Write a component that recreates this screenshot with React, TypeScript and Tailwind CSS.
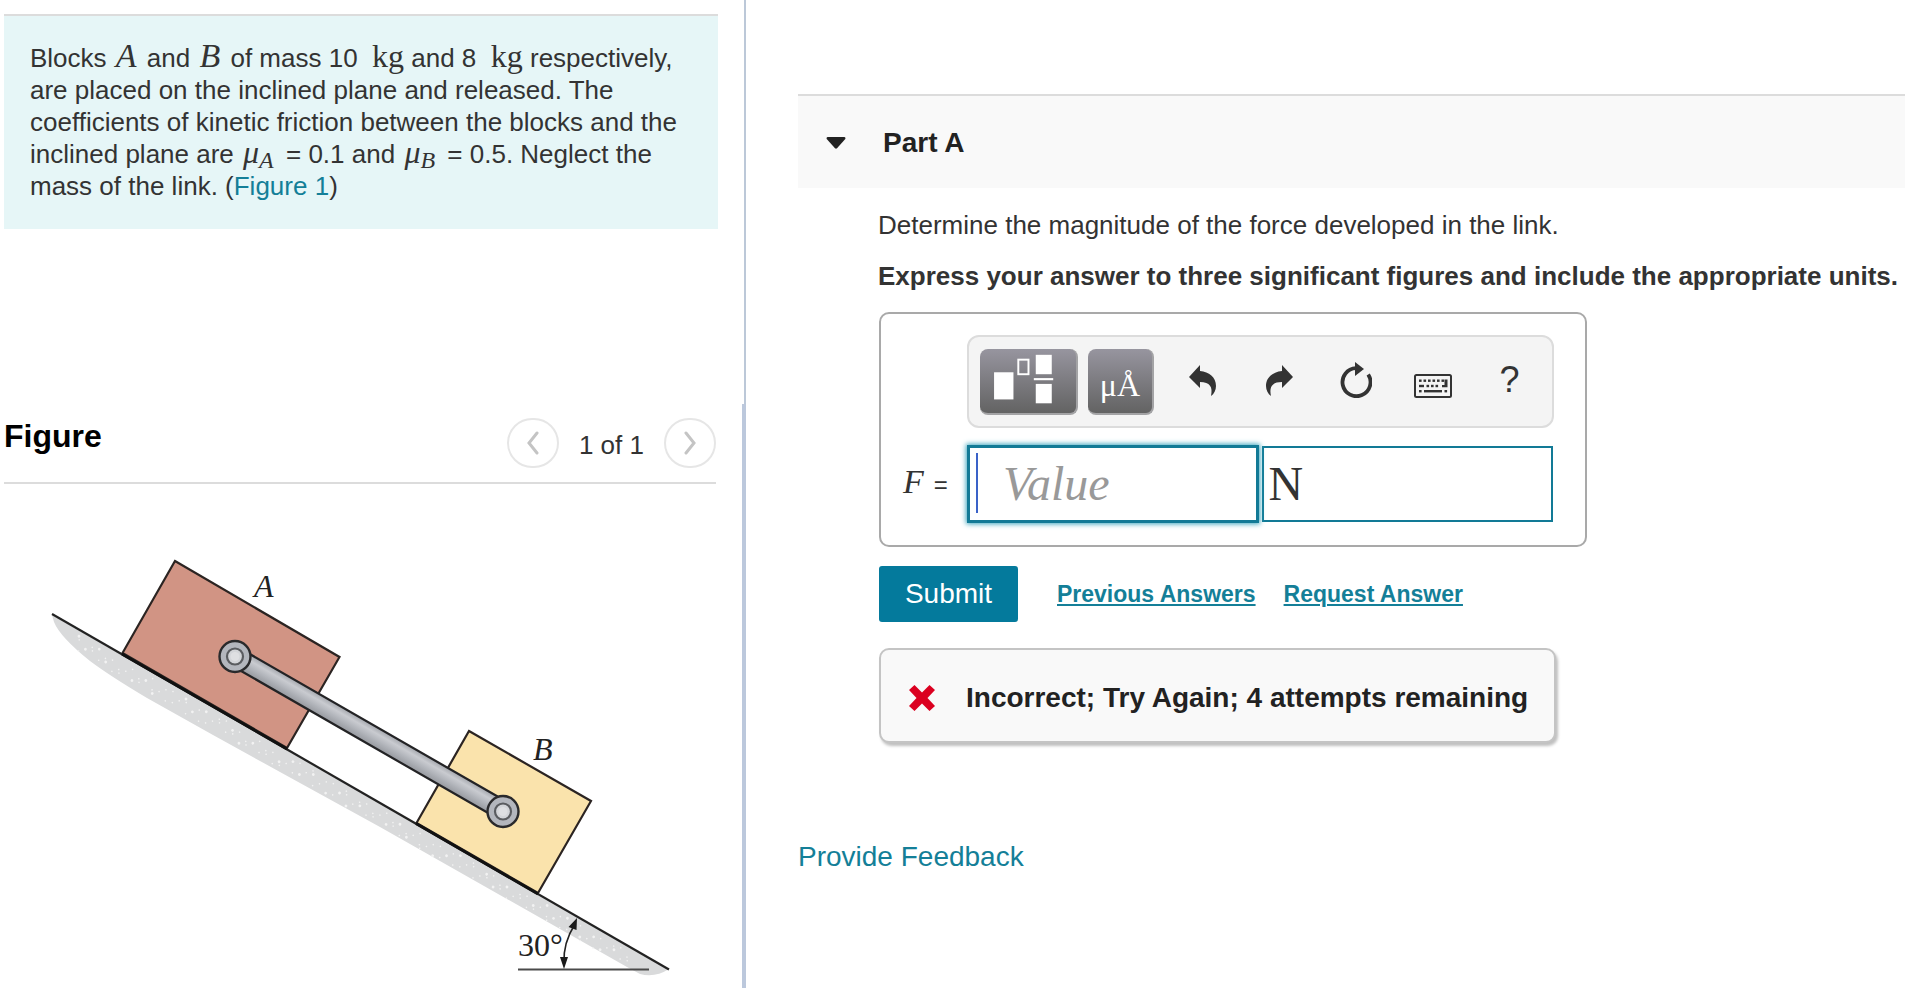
import { useState } from 'react'

interface AnswerLinkProps {
  href: string
  children: string
}

// Where the light specks sit along the ground strip: distance from the top of
// the slope and depth below the surface.
const SPECKS = Array.from({ length: 150 }, (_, i) => ({
  along: 34 + ((i * 73) % 640),
  depth: 5 + ((i * 37) % 15),
  r: i % 4 === 0 ? 1.4 : 0.8,
}))

function MathVar({ children }: { children: string }) {
  return (
    <i className="pr-[3px] pl-[2px] font-['Liberation_Serif',serif] text-[34px] leading-0">
      {children}
    </i>
  )
}

function Unit({ children }: { children: string }) {
  return (
    <span className="font-['Liberation_Serif',serif] text-[32px] leading-0">
      {children}
    </span>
  )
}

function Mu({ sub }: { sub: string }) {
  return (
    <i className="pr-[5px] pl-[2px] font-['Liberation_Serif',serif] text-[32px] leading-0">
      μ<sub className="bottom-[-5px] text-2xl leading-0">{sub}</sub>
    </i>
  )
}

function AnswerLink({ href, children }: AnswerLinkProps) {
  return (
    <a
      href={href}
      className="text-[23px] font-bold text-[#147f98] underline decoration-2 underline-offset-2"
    >
      {children}
    </a>
  )
}

function Chevron({ d }: { d: string }) {
  return (
    <svg viewBox="0 0 16 24" className="h-6 w-4" fill="none" stroke="#c4c4c4" strokeWidth="3">
      <path d={d} strokeLinecap="round" />
    </svg>
  )
}

function TemplatesIcon() {
  return (
    <svg viewBox="0 0 98 66" className="h-full w-full" fill="#fff">
      <rect x="14" y="24" width="20" height="28" />
      <rect x="39" y="11" width="10.5" height="15" fill="none" stroke="#fff" strokeWidth="2" />
      <rect x="57" y="6" width="16.5" height="20" />
      <rect x="55" y="30" width="20" height="2.2" />
      <rect x="57" y="36" width="16.5" height="20" />
    </svg>
  )
}

function UndoIcon({ className = '' }: { className?: string }) {
  return (
    <svg viewBox="0 0 27 31" className={`h-[31px] w-[27px] ${className}`} fill="#333">
      <path d="M0 12 L11 0 V6 C20 7 27 12 27 21 C27 25 25 29 22 31 C24 22 21 17 11 17 V23 Z" />
    </svg>
  )
}

function ResetIcon() {
  return (
    <svg viewBox="0 0 32 36" className="h-9 w-8">
      <path d="M28.2 12.5 A14 14 0 1 1 16 6.2" fill="none" stroke="#333" strokeWidth="3.8" />
      <path d="M15 0 L24 7 L15 14 Z" fill="#333" />
    </svg>
  )
}

function KeyboardIcon() {
  return (
    <svg viewBox="0 0 38 24" className="mt-3 h-6 w-[38px]" fill="#333">
      <rect x="1" y="1" width="36" height="22" rx="1.5" fill="none" stroke="#333" strokeWidth="2" />
      {[5, 9.5, 14, 18.5, 23, 27.5].map((x) => (
        <rect key={x} x={x} y="5.5" width="2.6" height="2.4" />
      ))}
      <path d="M30.5 5.5 h3 v7.8 h-5.5 v-2.4 h2.5 z" />
      <rect x="5" y="10.8" width="5" height="2.4" />
      {[12.5, 17, 21.5].map((x) => (
        <rect key={x} x={x} y="10.8" width="2.6" height="2.4" />
      ))}
      <rect x="5" y="16" width="2.6" height="2.4" />
      <rect x="10" y="16" width="18" height="2.4" />
      <rect x="30.5" y="16" width="2.6" height="2.4" />
    </svg>
  )
}

function Pin({ x, y }: { x: number; y: number }) {
  return (
    <g transform={`translate(${x} ${y})`} stroke="#2a2a2c">
      <circle r="15.5" fill="#b3b6bd" strokeWidth="2.4" />
      <circle r="8" fill="#d3d5d9" stroke="#5a5c60" strokeWidth="2.2" />
      <circle r="4.5" fill="#dedfe2" stroke="none" />
    </g>
  )
}

function InclineFigure() {
  return (
    <svg
      viewBox="4 484 712 504"
      className="block h-auto w-full"
      role="img"
      aria-label="Blocks A and B joined by a link on a 30 degree incline"
    >
      <defs>
        <linearGradient id="rod" x1="0" y1="0" x2="0" y2="1">
          <stop offset="0" stopColor="#a3a6ac" />
          <stop offset="0.3" stopColor="#c9cbd0" />
          <stop offset="0.6" stopColor="#b3b6bc" />
          <stop offset="1" stopColor="#96999f" />
        </linearGradient>
      </defs>

      {/* ground */}
      <path
        d="M52 615 L669 969 Q655 978 640 974 L627 967 L380 827 L280 772 L213 735 L147 698 Q110 676 90 661 Q60 637 54 622 Z"
        fill="#d9dadb"
      />
      <g transform="translate(52 615) rotate(29.9)" fill="#f2f2f2">
        {SPECKS.map((s, i) => (
          <circle key={i} cx={s.along} cy={s.depth} r={s.r} />
        ))}
      </g>

      {/* blocks */}
      <g stroke="#2b2422" strokeWidth="2.2" strokeLinejoin="miter">
        <path d="M175 561 L339.5 657 L287 748 L122.5 653 Z" fill="#d19484" />
        <path d="M469 731 L591 801 L538 893 L416.5 823 Z" fill="#fae3ac" />
      </g>
      <path d="M52 614 L669 969.5" stroke="#222" strokeWidth="2.2" />
      <path d="M122 654 L287 749 M416 823.5 L538 894" stroke="#111" strokeWidth="2.8" />

      {/* link */}
      <g transform="translate(235 656.5) rotate(29.9)">
        <rect x="12" y="-9.5" width="286" height="19" fill="url(#rod)" />
        <path d="M12 -9.5 H298 M12 9.5 H298" stroke="#232325" strokeWidth="2.2" />
      </g>
      <Pin x={235} y={656.5} />
      <Pin x={503} y={811.5} />

      {/* angle */}
      <path d="M518 969.5 H649" stroke="#4a4a4a" strokeWidth="2" />
      <path d="M575 924 Q563 943 564 963" fill="none" stroke="#222" strokeWidth="1.6" />
      <path d="M577 918 L576.5 930 L568.5 927 Z M564 969 L560 957 H568 Z" fill="#1a1a1a" />

      <g fill="#222" fontSize="32" className="font-['Liberation_Serif',serif]">
        <text x="254" y="597" fontStyle="italic">A</text>
        <text x="533" y="760" fontStyle="italic">B</text>
        <text x="518" y="956">30°</text>
      </g>
    </svg>
  )
}

function Toolbar() {
  const dark =
    'h-[66px] shrink-0 rounded-lg border-r-2 border-b-2 border-[#a3a3a5] bg-linear-to-b from-[#97959f] to-[#636363]'
  const plain = 'flex h-full min-w-0 flex-1 items-center justify-center pb-[3px]'

  return (
    <div className="flex h-[93px] items-center rounded-xl border-2 border-[#dcdcdc] bg-[#f4f4f4] pr-1 pl-[11px]">
      <button className={`w-[98px] ${dark}`} aria-label="Templates">
        <TemplatesIcon />
      </button>
      <button
        className={`mr-[10px] ml-[10px] w-[66px] pt-2 font-['Liberation_Serif',serif] text-[32px] text-white ${dark}`}
        aria-label="Symbols"
      >
        μÅ
      </button>
      <button className={plain} aria-label="Undo">
        <UndoIcon />
      </button>
      <button className={plain} aria-label="Redo">
        <UndoIcon className="-scale-x-100" />
      </button>
      <button className={plain} aria-label="Reset">
        <ResetIcon />
      </button>
      <button className={plain} aria-label="Keyboard shortcuts">
        <KeyboardIcon />
      </button>
      <button className={`text-4xl ${plain}`} aria-label="Help">
        ?
      </button>
    </div>
  )
}

function AnswerBox() {
  const [value, setValue] = useState('')
  const [unit, setUnit] = useState('N')

  return (
    <div className="mt-5 grid w-[708px] max-w-full grid-cols-[86px_minmax(0,1fr)] gap-y-[17px] rounded-[10px] border-2 border-[#a9a9a9] pt-[21px] pr-[31px] pb-[22px]">
      <div className="col-start-2">
        <Toolbar />
      </div>

      <label
        htmlFor="force-value"
        className="flex items-baseline gap-[10px] self-center pb-[2px] pl-[22px]"
      >
        <i className="font-['Liberation_Serif',serif] text-[34px]">F</i>
        <span className="text-2xl">=</span>
      </label>
      <div className="grid grid-cols-2 items-center gap-[3px] pr-[1px] font-['Liberation_Serif',serif] text-5xl">
        <div className="relative">
          <input
            id="force-value"
            value={value}
            onChange={(e) => setValue(e.target.value)}
            placeholder="Value"
            className="block h-[78px] w-full border-3 border-[#127a96] pb-[2px] pl-[33px] shadow-[0_0_5px_1px_#3aa5bd] outline-none placeholder:text-[#999] placeholder:italic"
          />
          {/* resting caret of the math field */}
          {value === '' && <span className="absolute top-2 left-[9px] h-[60px] w-[2px] bg-[#3a62c8]" />}
        </div>
        <input
          aria-label="Units"
          value={unit}
          onChange={(e) => setUnit(e.target.value)}
          className="h-[76px] w-full border-2 border-[#127a96] pb-[2px] pl-[5px] outline-none"
        />
      </div>
    </div>
  )
}

export default function App() {
  return (
    <div className="grid min-h-screen grid-cols-[746fr_1159fr] overflow-hidden bg-white font-['Liberation_Sans',Arial,sans-serif] text-[26px] leading-8 text-[#333]">
      <div className="flex flex-col">
        <section className="border-r-2 border-[#bcc8d8] pt-[14px] pr-[26px] pb-[175px] pl-1">
          <p className="border-t-2 border-[#dcdcdc] bg-[#e6f6f7] pt-[26px] pr-6 pb-[27px] pl-[26px]">
            Blocks <MathVar>A</MathVar> and <MathVar>B</MathVar> of mass 10 &nbsp;<Unit>kg</Unit> and
            8 &nbsp;<Unit>kg</Unit> respectively,
            <br />
            are placed on the inclined plane and released. The
            <br />
            coefficients of kinetic friction between the blocks and the
            <br />
            inclined plane are <Mu sub="A" /> = 0.1 and <Mu sub="B" /> = 0.5. Neglect the
            <br />
            mass of the link. (
            <a href="#figure" className="text-[#147f98]">
              Figure 1
            </a>
            )
          </p>
        </section>

        <section id="figure" className="flex-1 border-r-4 border-[#bcc8dc] pr-[26px] pl-1">
          <div className="flex h-20 items-center justify-between border-b-2 border-[#dcdcdc]">
            <h2 className="pb-3.5 text-[32px] font-bold text-black">Figure</h2>
            <div className="flex items-center gap-5">
              <button
                aria-label="Previous figure"
                className="flex h-[50px] w-[52px] items-center justify-center rounded-full border-2 border-[#e6e6e6]"
              >
                <Chevron d="M12 2 L4 12 L12 22" />
              </button>
              <span className="pt-1">1 of 1</span>
              <button
                aria-label="Next figure"
                className="flex h-[50px] w-[52px] items-center justify-center rounded-full border-2 border-[#e6e6e6]"
              >
                <Chevron d="M4 2 L12 12 L4 22" />
              </button>
            </div>
          </div>
          <InclineFigure />
        </section>
      </div>

      <main className="min-w-0 pt-[94px] pl-[52px]">
        <h2 className="flex h-[94px] items-center gap-[37px] border-t-2 border-[#dcdcdc] bg-[#f9f9f9] pt-[2px] pl-7 text-[28px] font-bold text-[#222]">
          <button aria-label="Collapse Part A">
            <svg viewBox="0 0 20 12" className="h-3 w-5" fill="#222">
              <path d="M1.5 0 H18.5 Q20 0.5 19.3 2 L11 11.3 Q10 12 9 11.3 L0.7 2 Q0 0.5 1.5 0 Z" />
            </svg>
          </button>
          Part A
        </h2>

        <div className="pt-[21px] pl-20">
          <p>Determine the magnitude of the force developed in the link.</p>
          <p className="mt-[19px] font-bold">
            Express your answer to three significant figures and include the appropriate units.
          </p>
        </div>

        <div className="pl-[81px]">
          <AnswerBox />

          <div className="mt-[19px] flex items-center gap-7">
            <button className="mr-[11px] h-14 w-[139px] rounded-[3px] bg-[#047a9c] text-[28px] text-white">
              Submit
            </button>
            <AnswerLink href="#previous">Previous Answers</AnswerLink>
            <AnswerLink href="#request">Request Answer</AnswerLink>
          </div>

          <div className="mt-[26px] flex h-[95px] w-[677px] max-w-full items-center gap-[31px] rounded-[10px] border-2 border-[#c4c4c4] bg-[#f9f9f9] pt-1 pl-7 text-[28px] font-bold text-[#222] shadow-[2px_3px_3px_#c0c0c0]">
            <svg viewBox="0 0 26 26" className="h-[26px] w-[26px] shrink-0" fill="#db0020">
              <path d="M5.5 0 L13 7.5 L20.5 0 L26 5 L18.5 13 L26 21 L20.5 26 L13 18.5 L5.5 26 L0 21 L7.5 13 L0 5 Z" />
            </svg>
            <p>Incorrect; Try Again; 4 attempts remaining</p>
          </div>
        </div>

        <a href="#feedback" className="mt-[98px] inline-block text-[28px] text-[#147f98]">
          Provide Feedback
        </a>
      </main>
    </div>
  )
}
